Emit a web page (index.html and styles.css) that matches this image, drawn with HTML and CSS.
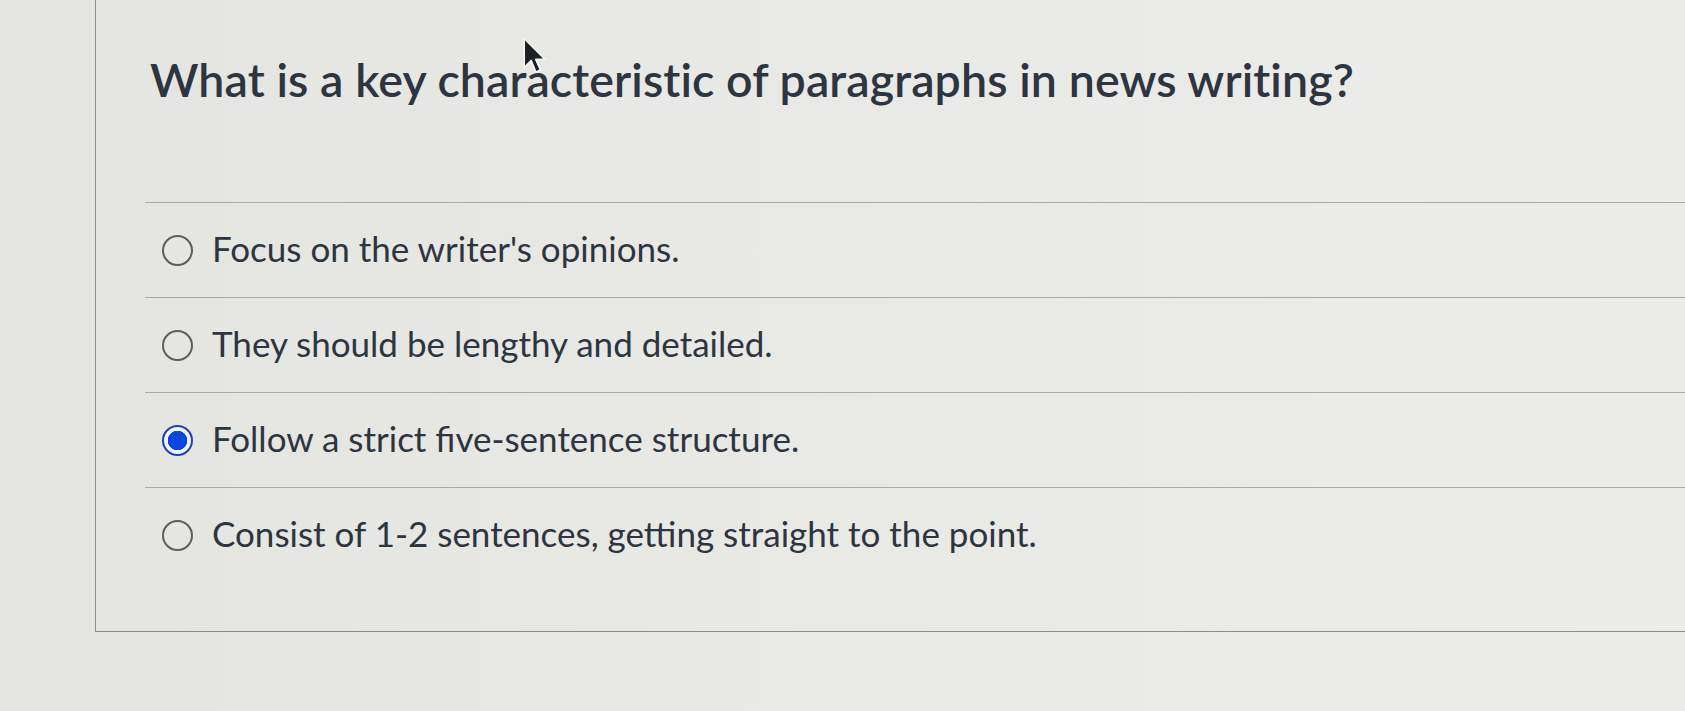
FILE: index.html
```html
<!DOCTYPE html>
<html lang="en">
<head>
    <meta charset="UTF-8">
    <meta name="viewport" content="width=device-width, initial-scale=1.0">
    <title>Quiz question</title>
    <link rel="stylesheet" href="styles.css">
</head>
<body>
    <div class="question">
        <h1 class="question-text">What is a key characteristic of paragraphs in news writing?</h1>

        <div class="answers">
            <label class="answer">
                <input type="radio" name="q1">
                <span class="radio"></span>
                <span class="answer-text">Focus on the writer's opinions.</span>
            </label>
            <label class="answer">
                <input type="radio" name="q1">
                <span class="radio"></span>
                <span class="answer-text">They should be lengthy and detailed.</span>
            </label>
            <label class="answer">
                <input type="radio" name="q1" checked>
                <span class="radio"></span>
                <span class="answer-text">Follow a strict five-sentence structure.</span>
            </label>
            <label class="answer">
                <input type="radio" name="q1">
                <span class="radio"></span>
                <span class="answer-text">Consist of 1-2 sentences, getting straight to the point.</span>
            </label>
        </div>
    </div>

    <!-- mouse pointer resting over the question -->
    <svg class="pointer" width="28" height="40" viewBox="0 0 24 34">
        <path d="M1 1 L1 26 L7 20 L11 30 L15 28 L11 19 L19 19 Z" fill="#1c1f24" stroke="#f4f4f2" stroke-width="1.5" stroke-linejoin="round"/>
    </svg>
</body>
</html>
```

FILE: styles.css
```css
body {
    margin: 0;
    height: 711px;
    overflow: hidden;
    font-family: Lato, "Open Sans", sans-serif;
    color: #2d3540;
    background: linear-gradient(90deg, #e4e4e1 0%, #e8e8e5 40%, #ececea 100%);
    position: relative;
}

.question {
    margin-left: 95px;
    height: 632px;
    box-sizing: border-box;
    border-left: 1px solid #8c8c8a;
    border-bottom: 1px solid #8c8c8a;
    padding-top: 49px;
}

.question-text {
    margin: 0 0 0 54px;
    font-size: 46.5px;
    font-weight: 600;
    line-height: 60px;
    letter-spacing: 0.1px;
}

.answers {
    margin: 93px 0 0 49px;
}

.answer {
    display: flex;
    align-items: center;
    height: 95px;
    box-sizing: border-box;
    border-top: 1px solid #a9a9a7;
    padding-left: 17px;
    font-size: 35px;
    cursor: pointer;
}

.answer input { display: none; }

.radio {
    width: 31px;
    height: 31px;
    border: 2px solid #5a5d61;
    border-radius: 50%;
    margin-right: 19px;
    flex: none;
    box-sizing: border-box;
}

.answer input:checked + .radio {
    border: 2.5px solid #1d3fb8;
    background: radial-gradient(circle, #0a47e0 0 9.5px, #f4f5f8 10px);
}

.answer-text { margin-top: -4px; }

.pointer {
    position: absolute;
    left: 523px;
    top: 37px;
}
```
